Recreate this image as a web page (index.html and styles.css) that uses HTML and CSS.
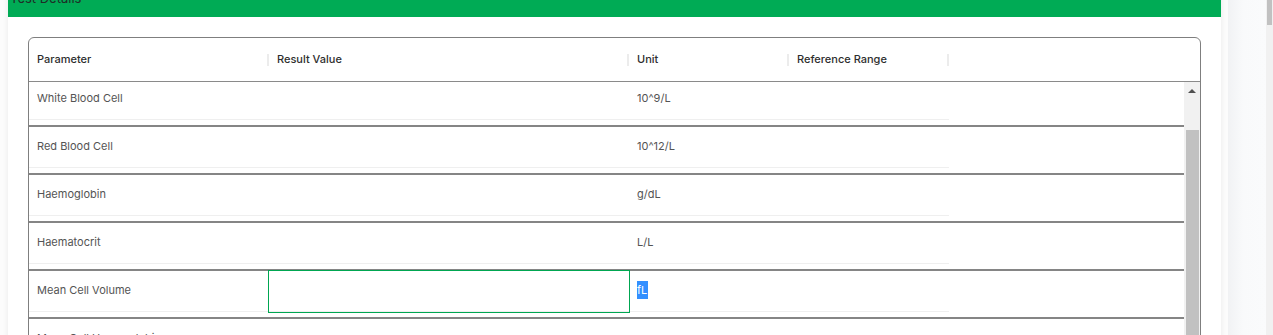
FILE: index.html
```html
<!DOCTYPE html>
<html lang="en">
<head>
  <meta charset="UTF-8">
  <meta name="viewport" content="width=device-width, initial-scale=1.0">
  <title>Test Details</title>
  <link rel="stylesheet" href="styles.css">
</head>
<body>

  <div class="page">
    <div class="main">
      <div class="card">
        <div class="card-header">Test Details</div>
        <div class="card-body">

          <div class="grid">
            <div class="grid-header">
              <div class="head-cell col-param">Parameter</div>
              <div class="head-cell col-result">Result Value</div>
              <div class="head-cell col-unit">Unit</div>
              <div class="head-cell col-range">Reference Range</div>
            </div>

            <div class="grid-body">
              <div class="rows">
                <div class="row">
                  <div class="cells">
                    <div class="cell col-param">White Blood Cell</div>
                    <div class="cell col-result"></div>
                    <div class="cell col-unit">10^9/L</div>
                    <div class="cell col-range"></div>
                  </div>
                </div>
                <div class="row">
                  <div class="cells">
                    <div class="cell col-param">Red Blood Cell</div>
                    <div class="cell col-result"></div>
                    <div class="cell col-unit">10^12/L</div>
                    <div class="cell col-range"></div>
                  </div>
                </div>
                <div class="row">
                  <div class="cells">
                    <div class="cell col-param">Haemoglobin</div>
                    <div class="cell col-result"></div>
                    <div class="cell col-unit">g/dL</div>
                    <div class="cell col-range"></div>
                  </div>
                </div>
                <div class="row">
                  <div class="cells">
                    <div class="cell col-param">Haematocrit</div>
                    <div class="cell col-result"></div>
                    <div class="cell col-unit">L/L</div>
                    <div class="cell col-range"></div>
                  </div>
                </div>
                <div class="row">
                  <div class="cells">
                    <div class="cell col-param">Mean Cell Volume</div>
                    <div class="cell col-result editing">
                      <input type="text" class="cell-editor">
                    </div>
                    <div class="cell col-unit"><span class="selected-text">fL</span></div>
                    <div class="cell col-range"></div>
                  </div>
                </div>
                <div class="row">
                  <div class="cells">
                    <div class="cell col-param">Mean Cell Haemoglobin</div>
                    <div class="cell col-result"></div>
                    <div class="cell col-unit">pg</div>
                    <div class="cell col-range"></div>
                  </div>
                </div>
              </div>

              <div class="vscroll">
                <div class="vscroll-arrow"></div>
                <div class="vscroll-thumb"></div>
              </div>
            </div>
          </div>

        </div>
      </div>
    </div>

    <div class="side-panel"></div>
    <div class="page-scroll">
      <div class="page-scroll-thumb"></div>
    </div>
  </div>

</body>
</html>
```

FILE: styles.css
```css
body {
  margin: 0;
  font-family: Inter, "Noto Sans", Arial, sans-serif;
  background-color: #fff;
  height: 335px;
  overflow: hidden;
}

.page {
  display: flex;
  height: 335px;
}

.main {
  width: 1228px;
  padding-left: 8px;
  box-sizing: border-box;
  background-color: #fcfcfc;
}

.card {
  width: 1213px;
  margin-top: -20px;
  background-color: #fff;
  box-shadow: 0 2px 6px rgba(0, 0, 0, 0.08);
  height: 400px;
}

.card-header {
  height: 37px;
  box-sizing: border-box;
  padding: 9px 2px;
  line-height: 18px;
  font-size: 13px;
  color: #1f2d27;
  background-color: #00ab55;
}

.card-body {
  padding: 20px 20px 0 20px;
}

.grid {
  border: 1px solid #7f7f7f;
  border-radius: 6px 6px 0 0;
  height: 340px;
  overflow: hidden;
}

.grid-header {
  display: flex;
  height: 43px;
  border-bottom: 1px solid #8a8a8a;
  font-size: 11px;
  font-weight: 500;
  color: #2e2e2e;
}

.head-cell {
  position: relative;
  display: flex;
  align-items: center;
  padding: 0 0 2px 8px;
  box-sizing: border-box;
}

.head-cell::after {
  content: "";
  position: absolute;
  right: 0;
  top: 16px;
  width: 2px;
  height: 12px;
  background-color: #ececec;
}

.col-param { width: 240px; }
.col-result { width: 360px; }
.col-unit { width: 160px; }
.col-range { width: 160px; }

.grid-body {
  display: flex;
  height: 300px;
}

.rows {
  flex: 1;
  overflow: hidden;
}

.row {
  border-top: 2px solid #858585;
  padding-bottom: 5px;
}

.row:first-child {
  margin-top: -5px;
}

.cells {
  display: flex;
  width: 920px;
  height: 41px;
  box-sizing: border-box;
  border-bottom: 1px solid #efefef;
  font-size: 11px;
  color: #545454;
}

.cell {
  position: relative;
  display: flex;
  align-items: center;
  padding: 0 0 2px 8px;
  box-sizing: border-box;
}

.cell-editor {
  position: absolute;
  left: -1px;
  top: -1px;
  width: 362px;
  height: 43px;
  margin: 0;
  padding: 0 8px;
  box-sizing: border-box;
  border: 1px solid #00a651;
  background: transparent;
  outline: none;
}

.selected-text {
  display: inline-block;
  line-height: 18px;
  padding: 0 1px 0 0;
  background-color: #3390ff;
  color: #fff;
}

.vscroll {
  width: 16px;
  background-color: #f1f1f1;
  display: flex;
  flex-direction: column;
  align-items: center;
}

.vscroll-arrow {
  margin-top: 7px;
  width: 0;
  height: 0;
  border-left: 4px solid transparent;
  border-right: 4px solid transparent;
  border-bottom: 4px solid #505050;
}

.vscroll-thumb {
  margin-top: 37px;
  width: 13px;
  height: 260px;
  background-color: #c1c1c1;
}

.side-panel {
  width: 38px;
  background: linear-gradient(to right, #f1f2f4, #f9fafb 40%, #fafbfc);
}

.page-scroll {
  width: 7px;
  background-color: #f1f1f1;
}

.page-scroll-thumb {
  margin-left: 1px;
  width: 5px;
  height: 25px;
  background-color: #c1c1c1;
}
```
